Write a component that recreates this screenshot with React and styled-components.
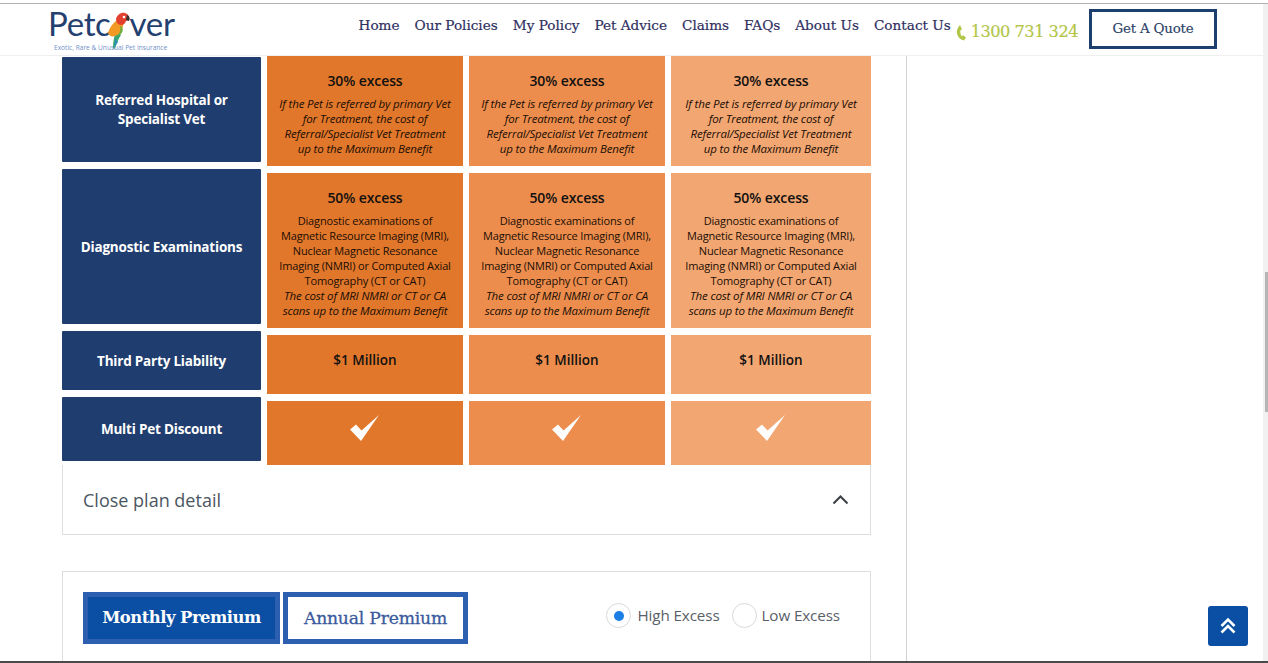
import React from "react";
import styled, { createGlobalStyle } from "styled-components";

const Global = createGlobalStyle`
  html, body { margin: 0; padding: 0; background: #fff; overflow: hidden; }
  * { box-sizing: border-box; }
`;
const SANS = `"Open Sans", "Noto Sans", sans-serif`;
const SERIF = `"DejaVu Serif", "Liberation Serif", serif`;

const Shell = styled.div`
  position: relative; width: 1268px; height: 663px; overflow: hidden; background: #fff;
  font-family: ${SANS};
  border-bottom: 2px solid #4a4a4a;
`;
const TopLine = styled.div`position: absolute; z-index: 6; top: 3px; left: 0; right: 0; height: 1px; background: #b0b0b0;`;
const Header = styled.header`
  position: absolute; z-index: 5; top: 4px; left: 0; right: 0; height: 52px;
  display: flex; align-items: flex-start; padding: 0 51px 0 48px;
  background: #fff; border-bottom: 1px solid #efefef;
`;
const Logo = styled.div`display: flex; flex-direction: column; width: 130px; padding-top: 1px;`;
const Wordmark = styled.div`
  display: flex; align-items: flex-start; height: 38px;
  font: 400 33px/36px Lato, "Open Sans", sans-serif; color: #24406f; letter-spacing: -.3px;
`;
const Tagline = styled.div`
  margin: 0 0 0 6px; font: 400 6.6px/9px ${SANS}; color: #7191c9; white-space: nowrap;
`;
const Nav = styled.nav`
  margin-left: auto; margin-right: 4px; display: flex; gap: 15px; padding-top: 12px;
`;
const NavLink = styled.a`
  font: 400 13.6px/18px ${SERIF}; color: #2f2f5f; white-space: nowrap;
  -webkit-text-stroke: .2px #2f2f5f;
`;
const Phone = styled.div`
  display: flex; align-items: center; gap: 4px; height: 20px; margin-top: 18px;
  font: 400 16.2px/20px ${SERIF}; color: #b3c648; white-space: nowrap; letter-spacing: -.5px;
  -webkit-text-stroke: .2px #b3c648;
`;
const QuoteButton = styled.a`
  margin: 5px 0 0 11px; width: 128px; height: 40px; border: 3px solid #1c3f6e;
  display: flex; align-items: center; justify-content: center;
  font: 400 13.4px/18px ${SERIF}; color: #2a3f66; letter-spacing: -.2px;
  -webkit-text-stroke: .15px #2a3f66;
`;

const Main = styled.main`display: flex; height: 663px; padding: 56px 0 0 62px;`;
const Column = styled.div`width: 809px; flex: none;`;
const Sidebar = styled.aside`margin: -1px 0 0 35px; width: 1px; background: #d2d2d2;`;

const Row = styled.div`
  display: grid; grid-template-columns: 199px 196px 196px 200px; column-gap: 6px;
  margin-bottom: ${p => p.$last ? 0 : 7}px;
  height: ${p => p.$h}px;
`;
const Label = styled.div`
  margin: ${p => p.$first ? "1px" : "-4px"} 0 4px; background: #1f3d6e; color: #fff; border-radius: 1px;
  display: flex; align-items: center; justify-content: center; text-align: center;
  font: 700 13.5px/19px ${SANS}; padding: ${p => p.$nudge ? 2 : 0}px 12px 0; letter-spacing: -.2px;
`;
const COLORS = ["#e1772a", "#ec8d4d", "#f2a671"];
const Cell = styled.div`
  background: ${p => COLORS[p.$c]}; color: #1a0d05; text-align: center;
  padding: ${p => p.$pad || "0"};
  display: ${p => p.$center ? "flex" : "block"}; align-items: center; justify-content: center;
`;
const Heading = styled.div`font: 600 14px/18px ${SANS}; color: #111; margin-bottom: 6px; letter-spacing: -.1px;`;
const Note = styled.div`font: 400 11px/15px ${SANS}; letter-spacing: -.15px; white-space: nowrap;`;
const Em = styled(Note)`font-style: italic; font-size: 11.5px;`;
const Amount = styled.div`font: 600 13.5px/18px ${SANS}; color: #111;`;

const CloseCard = styled.div`
  height: 70px; border: 1px solid #dedede; border-top: 0;
  display: flex; align-items: center; justify-content: space-between; padding: 0 21px 0 20px;
  font: 400 18px/24px ${SANS}; color: #4b5662;
`;
const PremiumCard = styled.section`
  margin-top: 36px; height: 110px; border: 1px solid #dedede; border-bottom: 0;
  display: flex; align-items: flex-start; padding: 20px 30px 0 20px;
`;
const Tab = styled.button`
  height: 52px; width: ${p => p.$w}px; margin-right: 3px; padding: 0;
  border: 5px solid #2d5fb0; background: ${p => p.$on ? "#0a4fa3" : "#fff"};
  color: ${p => p.$on ? "#fff" : "#3a5a9c"};
  font: ${p => p.$on ? 700 : 400} ${p => p.$on ? "16.4px" : "17.2px"}/22px ${SERIF};
  letter-spacing: ${p => p.$on ? "-.5px" : "-.2px"};
  -webkit-text-stroke: ${p => p.$on ? "0" : ".3px #3a5a9c"};
`;
const Radios = styled.div`margin: 11px 0 0 auto; display: flex; align-items: center;`;
const Dot = styled.span`
  width: 25px; height: 25px; border-radius: 50%; border: 1px solid #d9d9d9; background: #fff;
  display: flex; align-items: center; justify-content: center; margin-right: ${p => p.$mr}px;
  &::after { content: ""; width: 10px; height: 10px; border-radius: 50%; background: ${p => p.$on ? "#1b7fe6" : "transparent"}; }
`;
const RadioText = styled.span`font: 400 15.2px/25px ${SANS}; color: #5a6068; margin-right: ${p => p.$mr || 0}px; letter-spacing: -.1px;`;

const ScrollTop = styled.button`
  position: absolute; z-index: 4; left: 1208px; top: 606px; width: 40px; height: 40px; padding: 0;
  background: #0a4fa3; border: 0; border-radius: 3px; display: flex; align-items: center; justify-content: center;
`;
const Track = styled.div`position: absolute; z-index: 7; right: 0; top: 4px; bottom: 0; width: 5px; background: #f1f1f1;`;
const Thumb = styled.div`position: absolute; right: 0; top: 268px; width: 3px; height: 140px; background: #b6b6b6;`;

const Parrot = () => (
  <svg width="24" height="38" viewBox="0 0 24 38" style={{ margin: "7px -1px 0 -4px", flex: "none" }}>
    <path d="M9 19c-2 6-3 11-3 17l2 1c1-5 3-9 6-14z" fill="#3aa76d" />
    <path d="M8 26c0 4-1 7-1 10l4-6z" fill="#2c8fb5" />
    <path d="M1 21C3 14 8 9 13 6c4 1 4 7 2 11-1 4-4 6-7 7-3 1-6 0-7-3z" fill="#f29a23" />
    <path d="M9 7c1-4 5-7 9-6 3 1 5 4 4 7l-3 1c-1 3-3 4-5 4-3 0-5-3-5-6z" fill="#e2412f" />
    <circle cx="17" cy="5" r="1.3" fill="#fff" />
    <path d="M20 3c3 1 3 4 2 6l-3-1z" fill="#333" />
    <path d="M13 14c3 1 4 4 1 8l-3 1c2-3 3-6 2-9z" fill="#6fae3c" />
  </svg>
);
const Check = () => (
  <svg width="30" height="27" viewBox="0 0 30 27"><path d="M0 14.5 6 9.5 11.500 15.500 29 0 11 26Z" fill="#fdfdfd" /></svg>
);
const Handset = () => (
  <svg width="12" height="17" viewBox="0 0 12 17"><path d="M5 1C2.500 3.500 1.500 6.500 2 9.500 2.500 12.500 5 15.500 9 16.500l2-3-2.800-2.200-1.400 1C5.500 10.500 5 8 5.500 6.200L7 5.500 5 1z" fill="#b3c648" /></svg>
);

const data = [
  { h: 110, label: "Referred Hospital or Specialist Vet", first: true, head: "30% excess",
    em: ["If the Pet is referred by primary Vet", "for Treatment, the cost of", "Referral/Specialist Vet Treatment", "up to the Maximum Benefit"] },
  { h: 155, label: "Diagnostic Examinations", head: "50% excess",
    note: ["Diagnostic examinations of", "Magnetic Resource Imaging (MRI),", "Nuclear Magnetic Resonance", "Imaging (NMRI) or Computed Axial", "Tomography (CT or CAT)"],
    em: ["The cost of MRI NMRI or CT or CA", "scans up to the Maximum Benefit"] },
];
const Lines = ({ as: C, items }) => (items || []).map(t => <C key={t}>{t}</C>);

export default function App() {
  return (
    <Shell>
      <Global />
      <TopLine />
      <Header>
        <Logo>
          <Wordmark>Petc<Parrot />ver</Wordmark>
          <Tagline>Exotic, Rare &amp; Unusual Pet Insurance</Tagline>
        </Logo>
        <Nav>
          {["Home", "Our Policies", "My Policy", "Pet Advice", "Claims", "FAQs", "About Us", "Contact Us"].map(n => <NavLink key={n}>{n}</NavLink>)}
        </Nav>
        <Phone><Handset />1300 731 324</Phone>
        <QuoteButton>Get A Quote</QuoteButton>
      </Header>
      <Main>
        <Column>
          {data.map(r => (
            <Row key={r.label} $h={r.h}>
              <Label $first={r.first} $nudge={!r.first}>{r.label}</Label>
              {[0, 1, 2].map(c => (
                <Cell key={c} $c={c} $pad="16px 0 0">
                  <Heading>{r.head}</Heading>
                  <Lines as={Note} items={r.note} />
                  <Lines as={Em} items={r.em} />
                </Cell>
              ))}
            </Row>
          ))}
          <Row $h={59}>
            <Label $nudge>Third Party Liability</Label>
            {[0, 1, 2].map(c => <Cell key={c} $c={c} $center $pad="0 0 9px"><Amount>$1 Million</Amount></Cell>)}
          </Row>
          <Row $h={64} $last>
            <Label>Multi Pet Discount</Label>
            {[0, 1, 2].map(c => <Cell key={c} $c={c} $center $pad="0 0 9px"><Check /></Cell>)}
          </Row>
          <CloseCard>
            Close plan detail
            <svg width="17" height="11" viewBox="0 0 17 11"><path d="M1.500 9.500 8.500 2.500 15.500 9.500" fill="none" stroke="#3b4046" strokeWidth="2" /></svg>
          </CloseCard>
          <PremiumCard>
            <Tab $on $w={197}>Monthly Premium</Tab>
            <Tab $w={185}>Annual Premium</Tab>
            <Radios>
              <Dot $on $mr={6} />
              <RadioText $mr={12}>High Excess</RadioText>
              <Dot $mr={5} />
              <RadioText>Low Excess</RadioText>
            </Radios>
          </PremiumCard>
        </Column>
        <Sidebar />
      </Main>
      <ScrollTop>
        <svg width="18" height="18" viewBox="0 0 18 18" fill="none" stroke="#fff" strokeWidth="2.600"><path d="M2.500 9 9 2.500 15.500 9M2.500 15.500 9 9l6.500 6.500" /></svg>
      </ScrollTop>
      <Track><Thumb /></Track>
    </Shell>
  );
}
